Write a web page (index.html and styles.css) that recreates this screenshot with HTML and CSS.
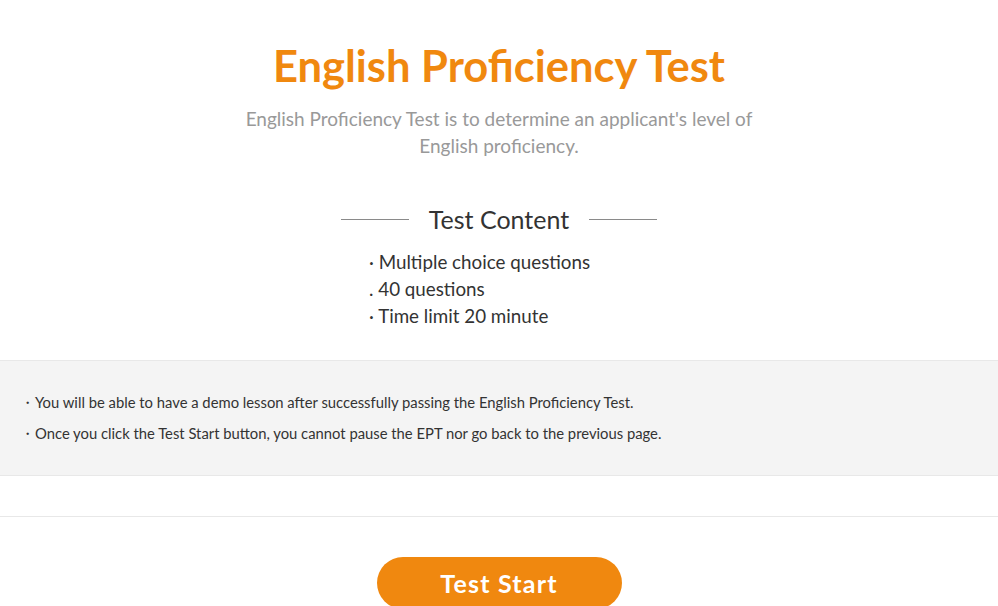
FILE: index.html
```html
<!DOCTYPE html>
<html lang="en">
<head>
<meta charset="utf-8">
<title>English Proficiency Test</title>
<link rel="stylesheet" href="styles.css">
</head>
<body>
<main class="page">
  <section class="intro">
    <h1 class="title">English Proficiency Test</h1>
    <p class="subtitle">English Proficiency Test is to determine an applicant's level of English proficiency.</p>
  </section>
  <section class="content">
    <div class="content-head">
      <span class="rule"></span>
      <h2 class="content-title">Test Content</h2>
      <span class="rule"></span>
    </div>
    <ul class="content-list">
      <li>· Multiple choice questions</li>
      <li>. 40 questions</li>
      <li>· Time limit 20 minute</li>
    </ul>
  </section>
  <section class="notice">
    <p>・You will be able to have a demo lesson after successfully passing the English Proficiency Test.</p>
    <p>・Once you click the Test Start button, you cannot pause the EPT nor go back to the previous page.</p>
  </section>
  <div class="spacer"></div>
  <div class="actions">
    <button class="start-btn" type="button">Test Start</button>
  </div>
</main>
</body>
</html>
```

FILE: styles.css
```css
* { box-sizing: border-box; }
html, body { margin: 0; padding: 0; background: #fff; }
body {
  font-family: "Lato", "Open Sans", "Liberation Sans", sans-serif;
  color: #333;
  overflow: hidden;
}
.page { width: 998px; }
.intro {
  padding-top: 40px;
  text-align: center;
}
.title {
  margin: 0;
  font-size: 43.5px;
  line-height: 50px;
  font-weight: 700;
  color: #f0880f;
}
.subtitle {
  margin: 15px auto 0;
  width: 540px;
  font-size: 19px;
  line-height: 27px;
  color: #999;
  font-weight: 400;
}
.content {
  padding-top: 45px;
  display: flex;
  flex-direction: column;
  align-items: center;
}
.content-head {
  display: flex;
  align-items: center;
  gap: 20px;
}
.rule {
  width: 68px;
  height: 1px;
  background: #8a8a8a;
}
.content-title {
  margin: 0;
  font-size: 25px;
  line-height: 30px;
  font-weight: 400;
  color: #333;
}
.content-list {
  list-style: none;
  margin: 14px 0 0;
  padding: 0;
  width: 260px;
  font-size: 18.8px;
  line-height: 27px;
  color: #333;
}
.notice {
  margin-top: 31px;
  background: #f4f4f4;
  border-top: 1px solid #e8e8e8;
  border-bottom: 1px solid #e8e8e8;
  padding: 26px 20px 26px;
}
.notice p {
  margin: 0;
  font-size: 14.8px;
  line-height: 31px;
  color: #333;
}
.spacer {
  height: 41px;
  border-bottom: 1px solid #e8e8e8;
}
.actions {
  padding-top: 40px;
  display: flex;
  justify-content: center;
}
.start-btn {
  width: 245px;
  height: 52px;
  border: none;
  border-radius: 26px;
  background: #f0880f;
  color: #fff;
  font-family: inherit;
  font-size: 25px;
  font-weight: 700;
  letter-spacing: 1.2px;
  cursor: pointer;
}
```
